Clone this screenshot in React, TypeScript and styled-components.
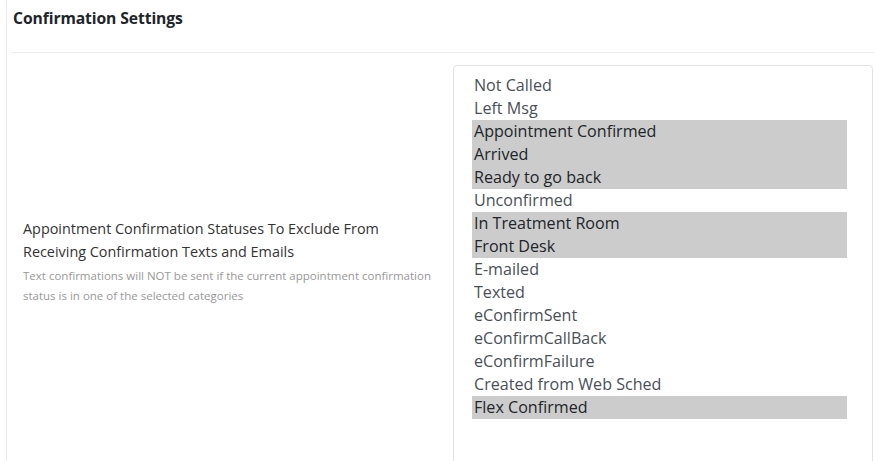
import styled, { createGlobalStyle } from "styled-components";

const GlobalStyle = createGlobalStyle`
  html, body {
    margin: 0;
    padding: 0;
    background: #ffffff;
    overflow: hidden;
  }
  body {
    font-family: "Open Sans", "Noto Sans", "Liberation Sans", sans-serif;
    color: #212529;
  }
`;

const Card = styled.section`
  margin-left: 6px;
  width: 890px;
  border-left: 1px solid #ececec;
  background: #ffffff;
`;

const CardHeader = styled.div`
  margin-left: 5px;
  padding: 8px 0 0 1px;
  height: 44px;
  border-bottom: 1px solid #ededed;
`;

const Title = styled.h5`
  margin: 0;
  font-size: 15.7px;
  font-weight: 700;
  line-height: 20px;
  color: #212529;
  letter-spacing: -0.1px;
`;

const SettingRow = styled.div`
  display: flex;
  align-items: center;
  padding: 12px 0 0 16px;
`;

const LabelColumn = styled.div`
  width: 430px;
  flex-shrink: 0;
  padding-bottom: 12px;
`;

const Label = styled.p`
  margin: 0;
  font-size: 14.4px;
  line-height: 23px;
  color: #333333;
`;

const Hint = styled.p`
  margin: 3px 0 0;
  font-size: 11.5px;
  line-height: 20px;
  color: #999999;
`;

const SelectBox = styled.div`
  width: 420px;
  height: 405px;
  box-sizing: border-box;
  padding: 8px 25px 8px 18px;
  border: 1px solid #e1e1e1;
  border-radius: 4px;
  background: #ffffff;
`;

const Option = styled.div<{ selected: boolean }>`
  height: 23px;
  line-height: 23px;
  padding-left: 2px;
  font-size: 16.1px;
  white-space: nowrap;
  color: ${({ selected }) => (selected ? "#212529" : "#495057")};
  background: ${({ selected }) => (selected ? "#cccccc" : "transparent")};
`;

const statuses = [
  { name: "Not Called", selected: false },
  { name: "Left Msg", selected: false },
  { name: "Appointment Confirmed", selected: true },
  { name: "Arrived", selected: true },
  { name: "Ready to go back", selected: true },
  { name: "Unconfirmed", selected: false },
  { name: "In Treatment Room", selected: true },
  { name: "Front Desk", selected: true },
  { name: "E-mailed", selected: false },
  { name: "Texted", selected: false },
  { name: "eConfirmSent", selected: false },
  { name: "eConfirmCallBack", selected: false },
  { name: "eConfirmFailure", selected: false },
  { name: "Created from Web Sched", selected: false },
  { name: "Flex Confirmed", selected: true },
];

export default function App() {
  return (
    <>
      <GlobalStyle />
      <Card>
        <CardHeader>
          <Title>Confirmation Settings</Title>
        </CardHeader>
        <SettingRow>
          <LabelColumn>
            <Label>
              Appointment Confirmation Statuses To Exclude From
              <br />
              Receiving Confirmation Texts and Emails
            </Label>
            <Hint>
              Text confirmations will NOT be sent if the current appointment confirmation
              <br />
              status is in one of the selected categories
            </Hint>
          </LabelColumn>
          <SelectBox role="listbox" aria-multiselectable="true">
            {statuses.map((s) => (
              <Option key={s.name} selected={s.selected} role="option" aria-selected={s.selected}>
                {s.name}
              </Option>
            ))}
          </SelectBox>
        </SettingRow>
      </Card>
    </>
  );
}
